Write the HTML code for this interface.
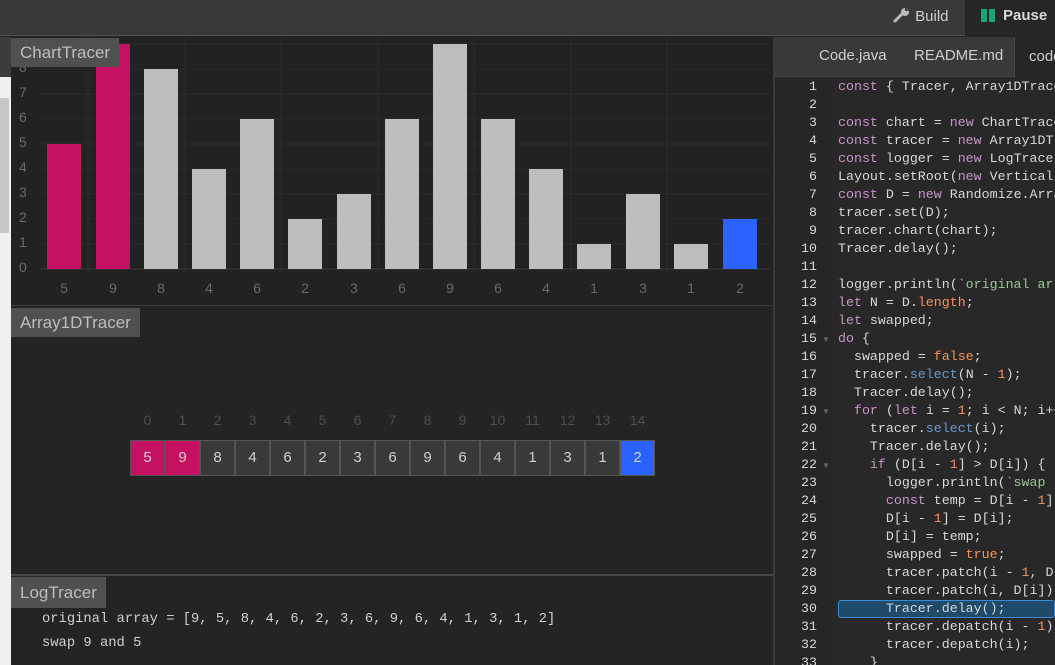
<!DOCTYPE html>
<html><head><meta charset="utf-8"><style>
*{margin:0;padding:0;box-sizing:border-box}
html,body{width:1055px;height:665px;overflow:hidden}
body{background:#242424;font-family:"Liberation Sans",sans-serif;position:relative}
.a{position:absolute}
#top{left:0;top:0;width:1055px;height:36px;background:#393939;border-bottom:1px solid #505050}
.title{position:absolute;background:#505050;color:#bdbdbd;font-size:17px;padding:0 9px;height:29px;line-height:29px}
.bar{position:absolute;width:34px;background:#bdbdbd}
.yl{position:absolute;left:19px;color:#6a6a6a;font-size:14px;width:10px}
.xl{position:absolute;top:280px;color:#6a6a6a;font-size:14px;width:34px;text-align:center}
.cell{position:absolute;top:440px;width:35px;height:36px;border:1px solid #555;background:#393939;color:#d0d0d0;font-size:15px;text-align:center;line-height:34px}
.idx{position:absolute;top:412px;width:35px;text-align:center;color:#4e4e4e;font-size:14px}
#code{left:830px;top:78px;font-family:"Liberation Mono",monospace;font-size:13.3px;line-height:18px;color:#d8d8d8;white-space:pre}
#gut{left:775px;top:78px;width:55px;height:587px;background:#262626;font-family:"Liberation Mono",monospace;font-size:13.3px;line-height:18px;color:#d8d8d8;text-align:right;padding-right:13px;white-space:pre;overflow:hidden}
.k{color:#c993c9}.n{color:#f99157}.b{color:#6699cc}.s{color:#99c794}
</style></head><body>
<div class="a" id="top"></div>
<div class="a" style="left:893px;top:7px;color:#cfcfcf;font-size:15px">
<svg width="18" height="16" viewBox="0 0 18 16" style="vertical-align:-2px"><path d="M2 14 L9 7" stroke="#bbb" stroke-width="3" stroke-linecap="round"/><circle cx="12" cy="5" r="4" fill="#bbb"/><path d="M12 0 L12 4 L16 4" fill="#393939"/></svg> Build</div>
<div class="a" style="left:965px;top:0;width:90px;height:36px;background:#262626"></div>
<div class="a" style="left:981px;top:9px;width:6px;height:13px;background:#1ba37a"></div>
<div class="a" style="left:989px;top:9px;width:6px;height:13px;background:#1ba37a"></div>
<div class="a" style="left:1003px;top:7px;color:#d8d8d8;font-size:15px;font-weight:bold">Pause</div>

<div class="a" style="left:0;top:37px;width:11px;height:40px;background:#3c3c3c"></div>
<div class="a" style="left:0;top:77px;width:11px;height:588px;background:#f0f0f0"></div>
<div class="a" style="left:0;top:98px;width:9px;height:135px;background:#c6c6c6"></div>

<div class="a" style="left:11px;top:37px;width:762px;height:268px;background:#222"></div>
<svg class="a" style="left:40px;top:37px" width="730" height="236">
<g stroke="#2c2c2c" stroke-width="1">
<line x1="0" y1="7" x2="730" y2="7"/><line x1="0" y1="32" x2="730" y2="32"/><line x1="0" y1="57" x2="730" y2="57"/><line x1="0" y1="82" x2="730" y2="82"/><line x1="0" y1="107" x2="730" y2="107"/><line x1="0" y1="132" x2="730" y2="132"/><line x1="0" y1="157" x2="730" y2="157"/><line x1="0" y1="182" x2="730" y2="182"/><line x1="0" y1="207" x2="730" y2="207"/>
<line x1="48" y1="0" x2="48" y2="236"/><line x1="145" y1="0" x2="145" y2="236"/><line x1="241" y1="0" x2="241" y2="236"/><line x1="338" y1="0" x2="338" y2="236"/><line x1="434" y1="0" x2="434" y2="236"/><line x1="531" y1="0" x2="531" y2="236"/><line x1="627" y1="0" x2="627" y2="236"/>
</g><line x1="0" y1="232" x2="730" y2="232" stroke="#3a3a3a"/></svg>
<div class="yl" style="top:259px">0</div><div class="yl" style="top:234px">1</div><div class="yl" style="top:209px">2</div><div class="yl" style="top:184px">3</div><div class="yl" style="top:159px">4</div><div class="yl" style="top:134px">5</div><div class="yl" style="top:109px">6</div><div class="yl" style="top:84px">7</div><div class="yl" style="top:59px">8</div>
<div class="bar" style="left:47px;top:144px;height:125px;background:#c51162"></div>
<div class="bar" style="left:96px;top:44px;height:225px;background:#c51162"></div>
<div class="bar" style="left:144px;top:69px;height:200px"></div>
<div class="bar" style="left:192px;top:169px;height:100px"></div>
<div class="bar" style="left:240px;top:119px;height:150px"></div>
<div class="bar" style="left:288px;top:219px;height:50px"></div>
<div class="bar" style="left:337px;top:194px;height:75px"></div>
<div class="bar" style="left:385px;top:119px;height:150px"></div>
<div class="bar" style="left:433px;top:44px;height:225px"></div>
<div class="bar" style="left:481px;top:119px;height:150px"></div>
<div class="bar" style="left:529px;top:169px;height:100px"></div>
<div class="bar" style="left:577px;top:244px;height:25px"></div>
<div class="bar" style="left:626px;top:194px;height:75px"></div>
<div class="bar" style="left:674px;top:244px;height:25px"></div>
<div class="bar" style="left:723px;top:219px;height:50px;background:#2962ff"></div>
<div class="xl" style="left:47px">5</div><div class="xl" style="left:96px">9</div><div class="xl" style="left:144px">8</div><div class="xl" style="left:192px">4</div><div class="xl" style="left:240px">6</div><div class="xl" style="left:288px">2</div><div class="xl" style="left:337px">3</div><div class="xl" style="left:385px">6</div><div class="xl" style="left:433px">9</div><div class="xl" style="left:481px">6</div><div class="xl" style="left:529px">4</div><div class="xl" style="left:577px">1</div><div class="xl" style="left:626px">3</div><div class="xl" style="left:674px">1</div><div class="xl" style="left:723px">2</div>
<div class="title" style="left:11px;top:38px">ChartTracer</div>

<div class="a" style="left:11px;top:305px;width:762px;height:1px;background:#3c3c3c"></div>
<div class="title" style="left:11px;top:308px">Array1DTracer</div>
<div class="idx" style="left:130px">0</div><div class="idx" style="left:165px">1</div><div class="idx" style="left:200px">2</div><div class="idx" style="left:235px">3</div><div class="idx" style="left:270px">4</div><div class="idx" style="left:305px">5</div><div class="idx" style="left:340px">6</div><div class="idx" style="left:375px">7</div><div class="idx" style="left:410px">8</div><div class="idx" style="left:445px">9</div><div class="idx" style="left:480px">10</div><div class="idx" style="left:515px">11</div><div class="idx" style="left:550px">12</div><div class="idx" style="left:585px">13</div><div class="idx" style="left:620px">14</div>
<div class="cell" style="left:130px;background:#c51162">5</div><div class="cell" style="left:165px;background:#c51162">9</div><div class="cell" style="left:200px">8</div><div class="cell" style="left:235px">4</div><div class="cell" style="left:270px">6</div><div class="cell" style="left:305px">2</div><div class="cell" style="left:340px">3</div><div class="cell" style="left:375px">6</div><div class="cell" style="left:410px">9</div><div class="cell" style="left:445px">6</div><div class="cell" style="left:480px">4</div><div class="cell" style="left:515px">1</div><div class="cell" style="left:550px">3</div><div class="cell" style="left:585px">1</div><div class="cell" style="left:620px;background:#2962ff">2</div>

<div class="a" style="left:11px;top:574px;width:762px;height:2px;background:#444"></div>
<div class="title" style="left:11px;top:577px;height:31px;line-height:31px">LogTracer</div>
<div class="a" style="left:42px;top:608px;font-family:'Liberation Mono',monospace;font-size:13.8px;line-height:24px;color:#d0d0d0;white-space:pre">original array = [9, 5, 8, 4, 6, 2, 3, 6, 9, 6, 4, 1, 3, 1, 2]
swap 9 and 5</div>

<div class="a" style="left:773px;top:37px;width:2px;height:628px;background:#3a3a3a"></div>
<div class="a" style="left:775px;top:37px;width:280px;height:40px;background:#393939;border-bottom:1px solid #444"></div>
<div class="a" style="left:819px;top:47px;color:#cfcfcf;font-size:15px">Code.java</div>
<div class="a" style="left:914px;top:47px;color:#cfcfcf;font-size:15px">README.md</div>
<div class="a" style="left:1014px;top:37px;width:41px;height:41px;background:#262626;border-left:1px solid #444"></div>
<div class="a" style="left:1029px;top:48px;color:#cfcfcf;font-size:15px">code.js</div>
<div class="a" style="left:830px;top:78px;width:225px;height:587px;background:#282828"></div>
<div class="a" style="left:838px;top:600px;width:217px;height:18px;background:#1f4a69;border:1px solid #3a8cd6;border-radius:3px"></div>
<div class="a" id="gut">1
2
3
4
5
6
7
8
9
10
11
12
13
14
15
16
17
18
19
20
21
22
23
24
25
26
27
28
29
30
31
32
33</div>
<div class="a" style="left:822px;top:335px;color:#666;font-size:8px">▼</div>
<div class="a" style="left:822px;top:407px;color:#666;font-size:8px">▼</div>
<div class="a" style="left:822px;top:461px;color:#666;font-size:8px">▼</div>
<div class="a" id="code" style="left:838px"><span class="k">const</span> { Tracer, Array1DTracer
 
<span class="k">const</span> chart = <span class="k">new</span> ChartTracer
<span class="k">const</span> tracer = <span class="k">new</span> Array1DTracer
<span class="k">const</span> logger = <span class="k">new</span> LogTracer
Layout.setRoot(<span class="k">new</span> VerticalLayout
<span class="k">const</span> D = <span class="k">new</span> Randomize.Array
tracer.set(D);
tracer.chart(chart);
Tracer.delay();
 
logger.println(<span class="s">`original array</span>
<span class="k">let</span> N = D.<span class="n">length</span>;
<span class="k">let</span> swapped;
<span class="k">do</span> {
  swapped = <span class="n">false</span>;
  tracer.<span class="b">select</span>(N - <span class="n">1</span>);
  Tracer.delay();
  <span class="k">for</span> (<span class="k">let</span> i = <span class="n">1</span>; i &lt; N; i++
    tracer.<span class="b">select</span>(i);
    Tracer.delay();
    <span class="k">if</span> (D[i - <span class="n">1</span>] &gt; D[i]) {
      logger.println(<span class="s">`swap</span>
      <span class="k">const</span> temp = D[i - <span class="n">1</span>];
      D[i - <span class="n">1</span>] = D[i];
      D[i] = temp;
      swapped = <span class="n">true</span>;
      tracer.patch(i - <span class="n">1</span>, D
      tracer.patch(i, D[i]);
      Tracer.delay();
      tracer.depatch(i - <span class="n">1</span>);
      tracer.depatch(i);
    }</div>
</body></html>
